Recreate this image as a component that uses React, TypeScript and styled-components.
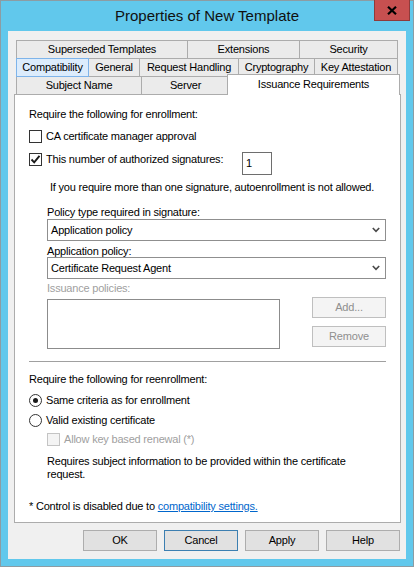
import React from 'react';
import styled, {createGlobalStyle, css} from 'styled-components';

const GlobalStyle = createGlobalStyle`
  html, body {
    margin: 0;
    padding: 0;
    background: #ffffff;
  }
  body {
    font-family: "Liberation Sans", Arial, sans-serif;
    font-size: 11px;
    letter-spacing: -0.2px;
    color: #000000;
  }
`;

const Window = styled.div`
  width: 414px;
  height: 567px;
  box-sizing: border-box;
  border: 1px solid #8c9ca3;
  background: #61c8ec;
  display: flex;
  flex-direction: column;
`;

const TitleBar = styled.div`
  height: 30px;
  display: grid;
  grid-template-columns: 1fr auto 1fr;
`;

const Title = styled.div`
  grid-column: 2;
  font-size: 15px;
  letter-spacing: 0;
  line-height: 29px;
  color: #101010;
`;

const CloseButton = styled.div`
  grid-column: 3;
  justify-self: end;
  align-self: start;
  margin-right: 3px;
  margin-top: -1px;
  width: 36px;
  height: 21px;
  box-sizing: border-box;
  background: #c75050;
  border: 1px solid #8f3a3a;
  border-top: none;
  display: flex;
  align-items: center;
  justify-content: center;
`;

const Client = styled.div`
  flex: 1;
  margin: 0 7px 7px 7px;
  background: #f0f0f0;
  padding: 9px 5px 0 6px;
  display: flex;
  flex-direction: column;
`;

const TabStrip = styled.div`
  padding: 0 2px;
  display: flex;
  flex-direction: column;
`;

const TabRow = styled.div`
  display: flex;
  align-items: flex-start;
  height: 19px;
  & + & {
    margin-top: -1px;
  }
`;

const Tab = styled.div<{ $w: number; $hover?: boolean; $active?: boolean }>`
  flex: 0 0 ${p => p.$w}px;
  height: 19px;
  box-sizing: border-box;
  border: 1px solid #acacac;
  background: #ebebeb;
  text-align: center;
  line-height: 17px;
  white-space: nowrap;
  & + & {
    margin-left: -1px;
  }
  ${p => p.$hover && css`
    position: relative;
    z-index: 1;
    background: #dcecfc;
    border-color: #7eb4ea;
  `}
  ${p => p.$active && css`
    position: relative;
    z-index: 2;
    height: 21px;
    margin-top: -2px;
    background: #ffffff;
    border-bottom: none;
    line-height: 18px;
    && {
      margin-left: -3px;
    }
  `}
`;

const Panel = styled.div`
  flex: 1;
  margin-top: -1px;
  background: #ffffff;
  border: 1px solid #acacac;
  padding: 12px 14px 0 14px;
  display: flex;
  flex-direction: column;
  align-items: flex-start;
`;

const Label = styled.div<{ $top?: number; $indent?: number; $lh?: number; $disabled?: boolean }>`
  margin-top: ${p => p.$top ?? 0}px;
  margin-left: ${p => p.$indent ?? 0}px;
  line-height: ${p => p.$lh ?? 14}px;
  color: ${p => (p.$disabled ? '#a0a0a0' : '#000000')};
  white-space: nowrap;
`;

const Paragraph = styled.div<{ $top?: number; $indent?: number }>`
  margin-top: ${p => p.$top ?? 0}px;
  margin-left: ${p => p.$indent ?? 0}px;
  width: 320px;
  line-height: 13px;
`;

const OptionRow = styled.label<{ $top?: number; $indent?: number; $disabled?: boolean }>`
  display: flex;
  align-items: center;
  gap: 4px;
  height: 16px;
  margin-top: ${p => p.$top ?? 0}px;
  margin-left: ${p => p.$indent ?? 0}px;
  color: ${p => (p.$disabled ? '#a0a0a0' : '#000000')};
  white-space: nowrap;
`;

const CheckBox = styled.span<{ $disabled?: boolean }>`
  width: 13px;
  height: 13px;
  box-sizing: border-box;
  border: 1px solid ${p => (p.$disabled ? '#c4c4c4' : '#333333')};
  background: ${p => (p.$disabled ? '#f4f4f4' : '#ffffff')};
  display: flex;
  align-items: center;
  justify-content: center;
  flex: none;
`;

const Radio = styled.span`
  width: 13px;
  height: 13px;
  box-sizing: border-box;
  border: 1px solid #333333;
  border-radius: 50%;
  background: #ffffff;
  display: flex;
  align-items: center;
  justify-content: center;
  flex: none;
`;

const RadioDot = styled.span`
  width: 5px;
  height: 5px;
  border-radius: 50%;
  background: #1a1a1a;
`;

const SignatureRow = styled.div`
  display: grid;
  grid-template-columns: 213px 30px;
  align-items: start;
  margin-top: 7px;
`;

const NumberBox = styled.div`
  margin-top: 1px;
  height: 23px;
  box-sizing: border-box;
  border: 1px solid #6e6e6e;
  padding-left: 3px;
  line-height: 20px;
`;

const Select = styled.div<{ $top?: number }>`
  margin-top: ${p => p.$top ?? 0}px;
  margin-left: 18px;
  width: 339px;
  height: 22px;
  box-sizing: border-box;
  border: 1px solid #8f8f8f;
  background: #ffffff;
  padding: 0 5px 0 3px;
  display: flex;
  align-items: center;
  justify-content: space-between;
`;

const PolicyRow = styled.div`
  display: flex;
  align-items: flex-start;
  gap: 32px;
  margin-top: 3px;
  margin-left: 18px;
`;

const ListBox = styled.div`
  margin-top: 2px;
  width: 233px;
  height: 50px;
  box-sizing: border-box;
  border: 1px solid #8c8c8c;
  background: #ffffff;
`;

const SideButtons = styled.div`
  display: flex;
  flex-direction: column;
  gap: 8px;
`;

const Button = styled.div<{ $disabled?: boolean; $default?: boolean }>`
  width: 74px;
  height: 21px;
  box-sizing: border-box;
  border: 1px solid ${p => (p.$default ? '#3c7fb1' : p.$disabled ? '#bfbfbf' : '#adadad')};
  background: ${p => (p.$disabled ? '#f4f4f4' : '#e1e1e1')};
  color: ${p => (p.$disabled ? '#8f8f8f' : '#000000')};
  text-align: center;
  line-height: 19px;
`;

const Separator = styled.div`
  margin-top: 12px;
  width: 357px;
  height: 1px;
  background: #a0a0a0;
`;

const Link = styled.a`
  color: #0066cc;
  text-decoration: underline;
`;

const ButtonBar = styled.div`
  display: flex;
  justify-content: flex-end;
  gap: 7px;
  margin-top: 7px;
  padding: 0 1px 8px 0;
`;

const topTabs = [
    {label: 'Superseded Templates', w: 172},
    {label: 'Extensions', w: 113},
    {label: 'Security', w: 99},
];

const middleTabs = [
    {label: 'Compatibility', w: 73, hover: true},
    {label: 'General', w: 52},
    {label: 'Request Handling', w: 100},
    {label: 'Cryptography', w: 77},
    {label: 'Key Attestation', w: 84},
];

const bottomTabs = [
    {label: 'Subject Name', w: 126},
    {label: 'Server', w: 89},
    {label: 'Issuance Requirements', w: 173, active: true},
];

const Check = () => (
    <svg width="11" height="11" viewBox="0 0 11 11">
        <path d="M1.5 5.5 L4.2 8.3 L9.5 1.8" fill="none" stroke="#1a1a1a" strokeWidth="1.9" />
    </svg>
);

const Chevron = () => (
    <svg width="8" height="6" viewBox="0 0 8 6">
        <path d="M0.8 1 L4 4.4 L7.2 1" fill="none" stroke="#4a4a4a" strokeWidth="1.6" />
    </svg>
);

const CloseGlyph = () => (
    <svg width="10" height="9" viewBox="0 0 10 9">
        <path d="M1 0.8 L9 8.2 M9 0.8 L1 8.2" stroke="#000000" strokeWidth="2.2" />
    </svg>
);

type TabSpec = { label: string, w: number, hover?: boolean, active?: boolean };

function TabLine(props: { tabs: TabSpec[] }) {
    return (
        <TabRow>
            {props.tabs.map(t => (
                <Tab key={t.label} $w={t.w} $hover={t.hover} $active={t.active}>{t.label}</Tab>
            ))}
        </TabRow>
    );
}

function App() {
    return (
        <>
            <GlobalStyle />
            <Window>
                <TitleBar>
                    <Title>Properties of New Template</Title>
                    <CloseButton><CloseGlyph /></CloseButton>
                </TitleBar>
                <Client>
                    <TabStrip>
                        <TabLine tabs={topTabs} />
                        <TabLine tabs={middleTabs} />
                        <TabLine tabs={bottomTabs} />
                    </TabStrip>
                    <Panel>
                        <Label>Require the following for enrollment:</Label>
                        <OptionRow $top={7}>
                            <CheckBox />
                            CA certificate manager approval
                        </OptionRow>
                        <SignatureRow>
                            <OptionRow>
                                <CheckBox><Check /></CheckBox>
                                This number of authorized signatures:
                            </OptionRow>
                            <NumberBox>1</NumberBox>
                        </SignatureRow>
                        <Label $top={5} $indent={21}>
                            If you require more than one signature, autoenrollment is not allowed.
                        </Label>
                        <Label $top={12} $indent={18} $lh={12}>Policy type required in signature:</Label>
                        <Select $top={1}>
                            Application policy
                            <Chevron />
                        </Select>
                        <Label $top={4} $indent={18} $lh={12}>Application policy:</Label>
                        <Select>
                            Certificate Request Agent
                            <Chevron />
                        </Select>
                        <Label $top={3} $indent={18} $lh={12} $disabled>Issuance policies:</Label>
                        <PolicyRow>
                            <ListBox />
                            <SideButtons>
                                <Button $disabled>Add...</Button>
                                <Button $disabled>Remove</Button>
                            </SideButtons>
                        </PolicyRow>
                        <Separator />
                        <Label $top={10}>Require the following for reenrollment:</Label>
                        <OptionRow $top={6}>
                            <Radio><RadioDot /></Radio>
                            Same criteria as for enrollment
                        </OptionRow>
                        <OptionRow $top={4}>
                            <Radio />
                            Valid existing certificate
                        </OptionRow>
                        <OptionRow $top={3} $indent={18} $disabled>
                            <CheckBox $disabled />
                            Allow key based renewal (*)
                        </OptionRow>
                        <Paragraph $top={8} $indent={18}>
                            Requires subject information to be provided within the certificate request.
                        </Paragraph>
                        <Label $top={18}>
                            * Control is disabled due to <Link>compatibility settings.</Link>
                        </Label>
                    </Panel>
                    <ButtonBar>
                        <Button>OK</Button>
                        <Button $default>Cancel</Button>
                        <Button>Apply</Button>
                        <Button>Help</Button>
                    </ButtonBar>
                </Client>
            </Window>
        </>
    );
}

export default App;
